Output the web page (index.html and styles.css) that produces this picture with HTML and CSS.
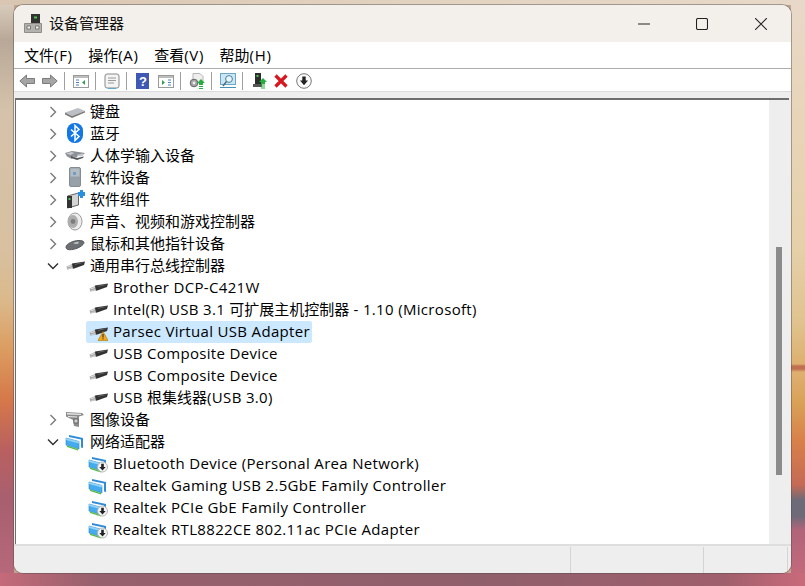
FILE: index.html
```html
<!DOCTYPE html>
<html lang="zh-CN">
<head>
<meta charset="utf-8">
<title>设备管理器</title>
<link rel="stylesheet" href="styles.css">
</head>
<body>
<svg class="defs" width="0" height="0" aria-hidden="true">
  <defs>
    <symbol id="chev-r" viewBox="0 0 16 16"><path d="M5.500 3l5 5-5 5" fill="none" stroke="#7a7a7a" stroke-width="1.400"/></symbol>
    <symbol id="chev-d" viewBox="0 0 16 16"><path d="M3 5.500l5 5 5-5" fill="none" stroke="#2e2e2e" stroke-width="1.400"/></symbol>
    <symbol id="usb" viewBox="0 0 20 22"><path d="M7 8.500L20 6.500 19 10 8.500 13.800 7 13z" fill="#333"/><path d="M1.500 11.500L7 9l1 4-5.500 1.800z" fill="#a8a8a8"/><path d="M2.500 11.500L6.500 10l.3 1-4 1.300zM3 13.500l4-1.300.2.600-4 1.300z" fill="#e6e6e6"/><path d="M10 9l8-1.600.5.400-8.500 2z" fill="#7a7a7a"/></symbol>
    <symbol id="net" viewBox="0 0 20 22"><path d="M4 4l14 3v10l-2-.5V8.500L4 6z" fill="#2f8bd6"/><path d="M1 7l13 3.500V18L1 14z" fill="#45abef" stroke="#2b7fc4" stroke-width=".6"/><path d="M1 7l13 3.500v2L1 9z" fill="#8fd3f7"/><path d="M2 14.500l11 3.500v1.500L2 16z" fill="#56bf48"/></symbol>
    <symbol id="net-d" viewBox="0 0 20 22"><use href="#net"/><circle cx="14.500" cy="14" r="5" fill="#f4f4f4" stroke="#b5b5b5"/><path d="M13.200 10.700h2.600v3.300h1.900l-3.200 3.500-3.200-3.500h1.900z" fill="#222"/></symbol>
  </defs>
</svg>
<main class="window">
  <header class="titlebar">
    <svg class="app-icon" width="18" height="19" viewBox="0 0 18 19"><path d="M7 0h9v10H7z" fill="#30332f"/><path d="M10 2.500h3v2h-3z" fill="#4fc15a"/><path d="M.5 9.500h17v9H.5z" fill="#b3b2ae" stroke="#8e8d88"/><path d="M3 12h3.500v3H3zM11.500 12H15v3h-3.500z" fill="#f4f4f2" stroke="#777"/></svg>
    <span class="title">设备管理器</span>
    <div class="caption">
      <svg width="12" height="12" viewBox="0 0 12 12"><path d="M0 6h12" stroke="#222" stroke-width="1"/></svg>
      <svg width="12" height="12" viewBox="0 0 12 12"><rect x=".5" y=".5" width="11" height="11" rx="1.500" fill="none" stroke="#222" stroke-width="1.100"/></svg>
      <svg class="cap-close" width="12" height="12" viewBox="0 0 12 12"><path d="M0 0l12 12M12 0L0 12" stroke="#222" stroke-width="1.100"/></svg>
    </div>
  </header>
  <nav class="menubar">
    <span>文件<span class="lat">(F)</span></span><span>操作<span class="lat">(A)</span></span><span>查看<span class="lat">(V)</span></span><span>帮助<span class="lat">(H)</span></span>
  </nav>
  <div class="toolbar">
    <svg class="tb" width="16" height="14" viewBox="0 0 16 14"><path d="M.8 7l6.700-6v3.500h8v5h-8V13z" fill="#a5a5a5" stroke="#7c7c7c"/></svg>
    <svg class="tb tb-next" width="16" height="14" viewBox="0 0 16 14"><path d="M15.200 7L8.500 1v3.500h-8v5h8V13z" fill="#a5a5a5" stroke="#7c7c7c"/></svg>
    <i class="sep"></i>
    <svg class="tb" width="16" height="13" viewBox="0 0 16 13"><rect x=".5" y=".5" width="15" height="12" fill="#fff" stroke="#9a9a9a"/><path d="M1 1h14v2H1z" fill="#bdbdbd"/><path d="M3 5h3M3 7.500h3M3 10h3" stroke="#4a7ebb"/><path d="M12 5v5L9 7.500z" fill="#3c9a54"/></svg>
    <i class="sep"></i>
    <svg class="tb" width="16" height="16" viewBox="0 0 16 16"><rect x="1" y="1" width="14" height="14" rx="2" fill="#f4f4f4" stroke="#888"/><path d="M4 5h8M4 7.500h8M4 10h6" stroke="#9a9a9a"/><path d="M4 15.500h8" stroke="#5aa9d8"/></svg>
    <i class="sep"></i>
    <svg class="tb" width="14" height="16" viewBox="0 0 14 16"><rect x="1" width="13" height="16" fill="#3f58b4"/><text x="4" y="13" class="q">?</text></svg>
    <svg class="tb tb-help" width="16" height="13" viewBox="0 0 16 13"><rect x=".5" y=".5" width="15" height="12" fill="#fff" stroke="#9a9a9a"/><path d="M1 1h14v2H1z" fill="#bdbdbd"/><path d="M10 5h3M10 7.500h3M10 10h3" stroke="#4a7ebb"/><path d="M4 5v5l3-2.500z" fill="#3c9a54"/></svg>
    <i class="sep"></i>
    <svg class="tb" width="16" height="16" viewBox="0 0 16 16"><path d="M4 .5h7l3 3V10H4z" fill="#eee" stroke="#b5b5b5"/><circle cx="5" cy="10" r="3.800" fill="#a5a5a5" stroke="#666"/><circle cx="5" cy="10" r="1.400" fill="#eee"/><path d="M12 6l3.800 4H14v2h-4v-2H8.200z" fill="#27ae3f"/><path d="M10 13h4v1h-4zM10 15h4v1h-4z" fill="#27ae3f"/></svg>
    <i class="sep"></i>
    <svg class="tb" width="16" height="16" viewBox="0 0 16 16"><rect x=".5" y=".5" width="15" height="11" fill="#c9e6f5" stroke="#6fa5c4"/><circle cx="9" cy="6" r="3.400" fill="#e8f6fc" stroke="#4d7e98"/><path d="M6.500 8.500L3 13" stroke="#4d6d7e" stroke-width="1.400"/><path d="M0 14.500h16" stroke="#4a8fb5"/></svg>
    <i class="sep"></i>
    <svg class="tb tb-up" width="14" height="16" viewBox="0 0 14 16"><path d="M2 0h6v11H2z" fill="#2b2e2c"/><path d="M3.500 2h2v2h-2z" fill="#4fc15a"/><path d="M0 11h9v3H0z" fill="#555"/><path d="M10 5l4 4h-2v2.500H8V9H6z" fill="#27ae3f"/><path d="M8 12.500h4v1H8zM8 14.500h4v1H8z" fill="#27ae3f"/></svg>
    <svg class="tb tb-x" width="14" height="14" viewBox="0 0 14 14"><path d="M1.500 1.500l11 11M12.500 1.500l-11 11" stroke="#d8161d" stroke-width="3.200"/></svg>
    <svg class="tb tb-dl" width="16" height="16" viewBox="0 0 16 16"><circle cx="8" cy="8" r="7.300" fill="#fafafa" stroke="#777"/><path d="M6.300 3.500h3.400v4H12L8 12.300 4 7.500h2.300z" fill="#222"/></svg>
  </div>
  <div class="gap"></div>
  <section class="content">
    <div class="tree">
      <div class="row"><svg class="chev" width="16" height="16"><use href="#chev-r"/></svg><svg class="ico" width="20" height="22" viewBox="0 0 20 22"><path d="M0 11.500L13 7l7 3-13 5z" fill="#bcbfc3"/><path d="M0 11.500l7 3.500v2l-7-3.500zM7 15l13-5v1.500L7 17z" fill="#7b7b7b"/></svg><span>键盘</span></div>
      <div class="row"><svg class="chev" width="16" height="16"><use href="#chev-r"/></svg><svg class="ico" width="20" height="22" viewBox="0 0 20 22"><rect x="2" width="16" height="20" rx="7.500" fill="#1477e6"/><path d="M6 6.500l8 7-4 4v-15l4 4-8 7" fill="none" stroke="#fff" stroke-width="1.500"/></svg><span>蓝牙</span></div>
      <div class="row"><svg class="chev" width="16" height="16"><use href="#chev-r"/></svg><svg class="ico" width="20" height="22" viewBox="0 0 20 22"><path d="M0 8l7-2 13 2-3 2.500-4-1-1 3-4-1-1 2.500-5-2.500z" fill="#8d9096"/><path d="M1 8.500L6.500 7l3 1-4 2zM13 10l4-1.500 2 .5-2 2.500-4-.5z" fill="#c6c9cd"/><path d="M6 11l6 2 7-1.500-1 1.500-6 2-6-2z" fill="#54575b"/></svg><span>人体学输入设备</span></div>
      <div class="row"><svg class="chev" width="16" height="16"><use href="#chev-r"/></svg><svg class="ico" width="20" height="22" viewBox="0 0 20 22"><rect x="4.500" y=".5" width="11" height="19" rx="1.500" fill="#98a0a7" stroke="#848b92"/><rect x="5.500" y="1.500" width="9" height="8" fill="#b4bdc4"/><rect x="8" y="5" width="3" height="3" fill="#6f9fc7"/></svg><span>软件设备</span></div>
      <div class="row"><svg class="chev" width="16" height="16"><use href="#chev-r"/></svg><svg class="ico" width="20" height="22" viewBox="0 0 20 22"><path d="M2.500 7l11-3v12l-11 3z" fill="#d4d4d4" stroke="#666"/><path d="M2 7h5v12H2z" fill="#333"/><path d="M3.500 9h2v2h-2z" fill="#4fc15a"/><path d="M13 3h2V1h3v2h2v4h-2v2h-3V7h-2z" fill="#2a8fdc"/></svg><span>软件组件</span></div>
      <div class="row"><svg class="chev" width="16" height="16"><use href="#chev-r"/></svg><svg class="ico" width="20" height="22" viewBox="0 0 20 22"><ellipse cx="10" cy="10.500" rx="7" ry="8.500" fill="#ededed" stroke="#9b9b9b"/><ellipse cx="8" cy="10.500" rx="5" ry="6.500" fill="#adadad"/><circle cx="8" cy="10.500" r="2.400" fill="#7d7d7d"/></svg><span>声音、视频和游戏控制器</span></div>
      <div class="row"><svg class="chev" width="16" height="16"><use href="#chev-r"/></svg><svg class="ico" width="20" height="22" viewBox="0 0 20 22"><path d="M1 14c0-3 7-6.500 13-6.500 5 0 6 2 4 4-3 3.500-11 6-15 5-1-.3-2-1-2-2.500z" fill="#6d6f72" stroke="#55575a"/><path d="M8 10c2-1 4-1.500 6-1.500l-1 2.500c-2 0-4 0-5-1z" fill="#b9bbbd"/></svg><span>鼠标和其他指针设备</span></div>
      <div class="row"><svg class="chev" width="16" height="16"><use href="#chev-d"/></svg><svg class="ico" width="20" height="22"><use href="#usb"/></svg><span>通用串行总线控制器</span></div>
      <div class="row child"><svg class="ico" width="20" height="22"><use href="#usb"/></svg><span class="lat">Brother DCP-C421W</span></div>
      <div class="row child"><svg class="ico" width="20" height="22"><use href="#usb"/></svg><span class="lat">Intel(R) USB 3.1 <span class="cjk">可扩展主机控制器</span> - 1.10 (Microsoft)</span></div>
      <div class="row child selected"><svg class="ico" width="20" height="22" viewBox="0 0 20 22"><use href="#usb"/><path d="M15 10.500l5 9H10z" fill="#f5a81c" stroke="#a87400" stroke-width=".6"/><path d="M14.500 13h1v3.500h-1zM14.500 17.300h1v1h-1z" fill="#222"/></svg><span class="lat">Parsec Virtual USB Adapter</span></div>
      <div class="row child"><svg class="ico" width="20" height="22"><use href="#usb"/></svg><span class="lat">USB Composite Device</span></div>
      <div class="row child"><svg class="ico" width="20" height="22"><use href="#usb"/></svg><span class="lat">USB Composite Device</span></div>
      <div class="row child"><svg class="ico" width="20" height="22"><use href="#usb"/></svg><span class="lat">USB <span class="cjk">根集线器</span>(USB 3.0)</span></div>
      <div class="row"><svg class="chev" width="16" height="16"><use href="#chev-r"/></svg><svg class="ico" width="20" height="22" viewBox="0 0 20 22"><path d="M1 3l16 1 2 2-5 1.500V18l-5-1-1-6-7-3.500z" fill="#8c8c8c"/><path d="M2 4l14 .8V6L2 5.500zM3 7l9 .5v1L3 8z" fill="#e8e8e8"/><rect x="9" y="10" width="4" height="4" fill="#d4d4d4" stroke="#666"/></svg><span>图像设备</span></div>
      <div class="row"><svg class="chev" width="16" height="16"><use href="#chev-d"/></svg><svg class="ico" width="20" height="22"><use href="#net"/></svg><span>网络适配器</span></div>
      <div class="row child"><svg class="ico" width="20" height="22"><use href="#net-d"/></svg><span class="lat">Bluetooth Device (Personal Area Network)</span></div>
      <div class="row child"><svg class="ico" width="20" height="22"><use href="#net"/></svg><span class="lat">Realtek Gaming USB 2.5GbE Family Controller</span></div>
      <div class="row child"><svg class="ico" width="20" height="22"><use href="#net-d"/></svg><span class="lat">Realtek PCIe GbE Family Controller</span></div>
      <div class="row child"><svg class="ico" width="20" height="22"><use href="#net-d"/></svg><span class="lat">Realtek RTL8822CE 802.11ac PCIe Adapter</span></div>
    </div>
    <div class="scrollbar"><div class="thumb"></div></div>
  </section>
  <footer class="statusbar">
    <div class="cell cell-main"></div><div class="cell cell-mid"></div><div class="cell cell-end"></div>
  </footer>
</main>
</body>
</html>
```
FILE: styles.css
```css
* { box-sizing: border-box; }
html, body { height: 100%; }
body {
  margin: 0;
  padding: 5px 14px 13px;
  overflow: hidden;
  font-family: "Open Sans", "Noto Sans CJK SC", sans-serif;
  background-color: #c4a58f;
  background-repeat: no-repeat;
  background-image:
    linear-gradient(90deg, #d8c6b2, #e2d2c0 50%, #e8d8c8),
    linear-gradient(90deg, #c56a7a, #96606c 12%, #8f5f6b 60%, #a05f6c 90%, #c96a7a),
    linear-gradient(180deg, #ddd0c0 0, #b8a898 40px, #d5c2aa 110px, #d8c0a0 250px, #dbb98c 300px, #dc9c60 350px, #d5784a 400px, #b96060 450px, #a85f70 500px, #b96a7c 586px),
    linear-gradient(180deg, #e8d8c8 0, #e8d5b8 120px, #e5d0a8 250px, #e0c490 320px, #ddb070 364px, #c07050 366px, #c07050 369px, #dfb070 372px, #d8a055 405px, #d9814a 440px, #c56a55 485px, #6e6a78 500px, #6e6a78 516px, #b0647a 530px, #c96a7c 586px);
  background-position: 0 0, 0 100%, 0 0, 100% 0;
  background-size: 100% 5px, 100% 13px, 14px 100%, 14px 100%;
}
.defs { position: absolute; }
.window {
  height: 568px;
  width: 777px;
  display: flex;
  flex-direction: column;
  background: #eee;
  border-radius: 9px;
  overflow: hidden;
  box-shadow: 0 0 0 1px rgba(80,75,75,.45);
}
.titlebar {
  height: 37px;
  flex: none;
  display: flex;
  align-items: center;
  background: #f3f0eb;
  padding-left: 10px;
}
.app-icon { flex: none; }
.title {
  margin: 0 0 2px 7px;
  font-size: 15px;
  color: #111;
}
.caption {
  margin-left: auto;
  display: flex;
  gap: 46px;
  padding-right: 24px;
}
.cap-close { margin-left: 1px; }
.menubar {
  height: 27px;
  flex: none;
  display: flex;
  gap: 15.500px;
  align-items: center;
  padding: 0 0 2px 10px;
  background: #fff;
  border-bottom: 1px solid #adadad;
  font-size: 15px;
  color: #000;
}
.lat { letter-spacing: .33px; }
.menubar .lat { letter-spacing: .7px; }
.cjk { letter-spacing: 0; }
.toolbar {
  height: 23px;
  flex: none;
  display: flex;
  align-items: center;
  background: #fff;
  border-bottom: 1px solid #dcdcdc;
  padding: 2px 0 0 5px;
}
.tb { flex: none; }
.tb-next { margin-left: 7px; }
.tb-help { margin-left: 9px; }
.tb-up { margin-left: 2px; }
.tb-x { margin-left: 7px; }
.tb-dl { margin-left: 8px; }
.q { font: bold 13px "Liberation Sans", sans-serif; fill: #fff; }
.sep { flex: none; width: 1px; height: 18px; background: #9f9f9f; margin: 0 8px 0 6px; }
.gap { height: 6px; flex: none; background: #eee; }
.content {
  height: 446px;
  flex: none;
  margin: 0 2px 0 1px;
  display: flex;
  background: #fff;
  border-top: 2px solid #6e6e6e;
  border-left: 1px solid #6e6e6e;
  overflow: hidden;
}
.tree { flex: 1; min-width: 0; padding-top: 1px; }
.row {
  height: 22px;
  display: flex;
  align-items: center;
  padding-left: 29px;
  font-size: 15px;
  line-height: 20px;
  color: #000;
  white-space: nowrap;
}
.row > span { margin-bottom: 2px; }
.chev { flex: none; }
.row .ico { flex: none; margin-left: 4px; margin-right: 5px; }
.row.child { padding-left: 70px; }
.row.child .ico { margin-left: 2px; margin-right: 5px; }
.row.selected { background: #cce8ff; width: 226px; margin-left: 70px; padding-left: 0; border-radius: 2px; }
.scrollbar { width: 20px; flex: none; background: #eee; padding: 147px 0 0 7px; }
.thumb { width: 6px; height: 228px; background: #8b8b8b; }
.statusbar {
  flex: 1;
  display: flex;
  border-top: 2px solid #dedede;
  background: #eee;
  padding: 1px 3px 0 0;
}
.cell { height: 100%; border-right: 1px solid #d4d4d4; }
.cell-main { width: 557px; }
.cell-mid { width: 133px; }
.cell-end { flex: 1; }
```
